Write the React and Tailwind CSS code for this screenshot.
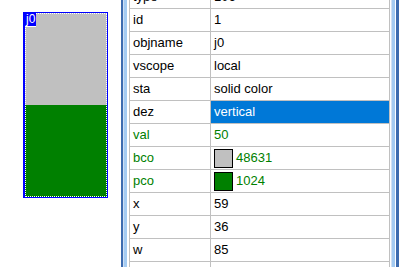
import React from "react";

const rows = [
  { k: "type", v: "106" },
  { k: "id", v: "1" },
  { k: "objname", v: "j0" },
  { k: "vscope", v: "local" },
  { k: "sta", v: "solid color" },
  { k: "dez", v: "vertical", sel: true },
  { k: "val", v: "50", green: true },
  { k: "bco", v: "48631", green: true, swatch: "#c0c0c0" },
  { k: "pco", v: "1024", green: true, swatch: "#008000" },
  { k: "x", v: "59" },
  { k: "y", v: "36" },
  { k: "w", v: "85" },
  { k: "", v: "" },
];

export default function App() {
  return (
    <div
      className="w-[400px] h-[267px] overflow-hidden bg-white flex text-[13px] text-black"
      style={{ fontFamily: '"Liberation Sans", Arial, sans-serif' }}
    >
      {/* canvas */}
      <div className="w-[121px] shrink-0 pl-[23px] pt-[12px]">
        <div className="relative w-[85px] h-[186px] flex flex-col">
          <div className="h-[93px] bg-[#c0c0c0]" />
          <div className="flex-1 bg-[#008000]" />
          <div className="absolute inset-0 border border-[#0000ff] border-l-2" />
          <div className="absolute left-[2px] top-[1px] right-[1px] bottom-[1px] border border-dotted border-white" />
          <div className="absolute left-[2px] top-[1px] bg-[#0000ff] text-white text-[12px] leading-[13px] px-[1px] border-b border-white">
            j0
          </div>
        </div>
      </div>
      {/* left frame */}
      <div className="w-[2px] shrink-0 bg-[#3d6cb0]" />
      <div className="w-[1px] shrink-0 bg-[#cfe0f5]" />
      <div className="w-[3px] shrink-0 bg-[#a4cbf2]" />
      <div className="w-[2px] shrink-0 bg-white" />
      {/* table */}
      <div className="w-[261px] shrink-0 border-x border-[#c0c0c0] flex flex-col -mt-[14px]">
        {rows.map((r, i) => (
          <div
            key={i}
            className={`grid grid-cols-[81px_1fr] h-[23px] shrink-0 border-b border-[#c0c0c0] leading-[22px] ${
              r.green ? "text-[#008000]" : "text-black"
            }`}
          >
            <div className="border-r border-[#c0c0c0] pl-[3px] whitespace-nowrap">{r.k}</div>
            <div
              className={`flex items-center pl-[3px] whitespace-nowrap ${
                r.sel ? "bg-[#0078d7] text-white" : ""
              }`}
            >
              {r.swatch && (
                <span
                  className="w-[19px] h-[19px] border border-black mr-[3px] shrink-0"
                  style={{ backgroundColor: r.swatch }}
                />
              )}
              {r.v}
            </div>
          </div>
        ))}
      </div>
      {/* right frame */}
      <div className="w-[1px] shrink-0 bg-white" />
      <div className="w-[1px] shrink-0 bg-[#cfe0f5]" />
      <div className="w-[3px] shrink-0 bg-[#a4cbf2]" />
      <div className="w-[1px] shrink-0 bg-white" />
      <div className="w-[3px] shrink-0 bg-[#3d6cb0]" />
      <div className="flex-1 bg-white" />
    </div>
  );
}
